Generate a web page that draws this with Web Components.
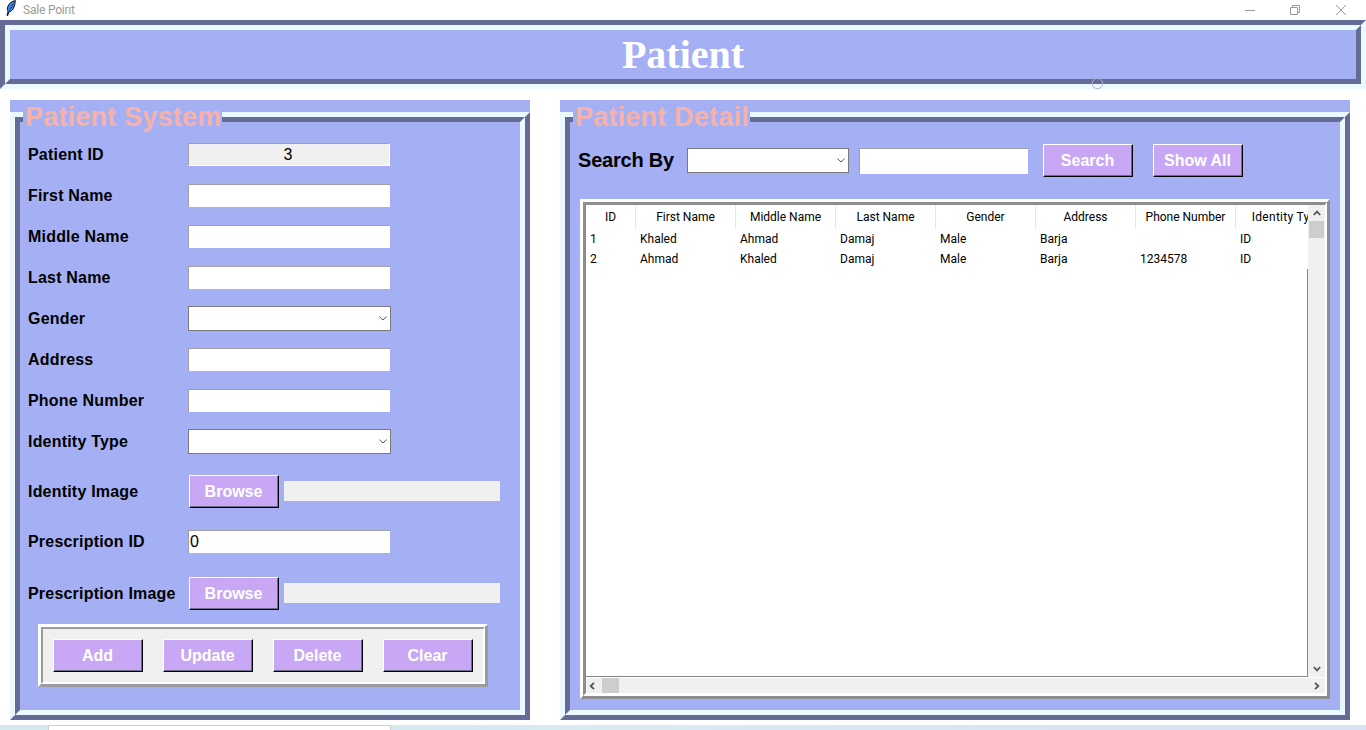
<!DOCTYPE html>
<html>
<head>
<meta charset="utf-8">
<title>Sale Point</title>
<style>
  html, body { margin: 0; height: 730px; overflow: hidden; background: #fff; }
  body { font-family: "Liberation Sans", Arial, sans-serif; display: flex; flex-direction: column; position: relative; }
  .panels { display: flex; gap: 30px; padding: 11px 16px 5px 10px; }
  .pointer { position: absolute; left: 1091px; top: 77px; }
</style>
</head>
<body>
<win-titlebar>Sale Point</win-titlebar>
<page-header>Patient</page-header>

<div class="panels">
  <ridge-panel label="Patient System" style="width:520px">
    <patient-form></patient-form>
  </ridge-panel>
  <ridge-panel label="Patient Detail" style="width:790px">
    <patient-detail></patient-detail>
  </ridge-panel>
</div>

<desk-strip></desk-strip>

<svg class="pointer" width="13" height="13" viewBox="0 0 13 13"><circle cx="6.5" cy="6.5" r="5.2" fill="none" stroke="#aeb3cf" stroke-width="1"/></svg>

<script>
/* small window widgets - plain Web Components */

const colors = `
  --blue: #a5b0f4;
  --dark: #636b96;
  --light: #e9f9ff;
  --purple: #c8a7f4;
  --entry: #f0f0f0;
`;

const chevron = `<svg width="8" height="5" viewBox="0 0 8 5"><path d="M.4 .6 4 4 7.6 .6" fill="none" stroke="#555" stroke-width="1"/></svg>`;

function define(name, html, init) {
  const tpl = document.createElement('template');
  tpl.innerHTML = html;
  customElements.define(name, class extends HTMLElement {
    constructor() {
      super();
      this.attachShadow({ mode: 'open' });
      this.shadowRoot.appendChild(tpl.content.cloneNode(true));
    }
    connectedCallback() { if (init) init(this, this.shadowRoot); }
  });
}

define('win-titlebar', `
  <style>
    :host { display: flex; align-items: center; height: 20px; background: #fff; font: 12px Roboto, sans-serif; letter-spacing: -.2px; color: #9a9a9a; padding-right: 5px; }
    .feather { margin: 0 7px 0 6px; align-self: flex-start; }
    .name { flex: 1; }
    .ctl { display: flex; width: 46px; justify-content: center; }
  </style>
  <svg class="feather" width="10" height="16" viewBox="0 0 10 16">
    <path d="M9.3 .6C6.4 1 3.2 3 1.9 6.4 1.1 8.6 1.3 10.4 2 11.6L1 15.4 1.7 15.6 2.8 12C5.2 11.8 7.4 9.4 8.3 6.2 8.9 4.2 9.2 2.2 9.3 .6Z" fill="#3f86e0" stroke="#0c0f16" stroke-width="1"/>
    <path d="M7.6 3.4C6.2 5.6 4.8 8 3.2 10.2" fill="none" stroke="#0c2a55" stroke-width=".8"/>
  </svg>
  <span class="name"><slot></slot></span>
  <span class="ctl"><svg width="10" height="10" viewBox="0 0 10 10"><path d="M0 5.5H10" stroke="#999" fill="none"/></svg></span>
  <span class="ctl" style="margin-left:-1px"><svg width="10" height="10" viewBox="0 0 10 10"><path d="M.5 2.5H7.5V9.5H.5ZM2.5 2.5V.5H9.5V7.5H7.5" stroke="#999" fill="none"/></svg></span>
  <span class="ctl" style="margin-right:-3px;margin-left:0"><svg width="10" height="10" viewBox="0 0 10 10"><path d="M0 0 10 10M10 0 0 10" stroke="#999" fill="none"/></svg></span>
`);

define('page-header', `
  <style>
    :host { ${colors} display: block; box-sizing: border-box; height: 69px; border: 5px solid; border-color: var(--dark) var(--light) var(--light) var(--dark); }
    .in { box-sizing: border-box; height: 59px; border: 5px solid; border-color: var(--light) var(--dark) var(--dark) var(--light); background: var(--blue);
      display: flex; align-items: center; justify-content: center; font: bold 40px/49px "Liberation Serif", "Times New Roman", serif; color: #fff; }
  </style>
  <div class="in"><slot></slot></div>
`);

define('ridge-panel', `
  <style>
    :host { ${colors} display: block; box-sizing: border-box; height: 620px; padding-top: 12px; background: var(--blue); position: relative; }
    .out { box-sizing: border-box; height: 608px; border: 5px solid; border-color: var(--light) var(--dark) var(--dark) var(--light); }
    .in { box-sizing: border-box; height: 598px; border: 5px solid; border-color: var(--dark) var(--light) var(--light) var(--dark); }
    .label { position: absolute; left: 14px; top: 2px; padding: 0 1px 0 2px; height: 31px; background: var(--blue);
      font: bold 27px/31px "Liberation Sans", Arial, sans-serif; letter-spacing: .2px; color: #f6b2a8; margin-left: -1px; }
  </style>
  <div class="out"><div class="in"><slot></slot></div></div>
  <div class="label"></div>
`, (el, root) => { root.querySelector('.label').textContent = el.getAttribute('label'); });

define('ui-btn', `
  <style>
    :host { ${colors} display: block; flex: none; box-sizing: border-box; width: 90px; height: 33px; background: var(--purple);
      border-style: solid; border-width: 1px 1px 1px 1px; border-color: #fff #000 #000 #fff; box-shadow: inset -1px -1px 0 #6e6a8c;
      font: bold 16px/32px "Liberation Sans", Arial, sans-serif; color: #fff; text-align: center; padding-right: 1px; }
  </style>
  <slot></slot>
`);

define('ui-entry', `
  <style>
    :host { ${colors} display: block; flex: none; box-sizing: border-box; width: 202px; height: 23px; background: #fff;
      border-style: solid; border-width: 1px 0 0 1px; border-color: #a0a0a0;
      font: 16px/22px "Liberation Sans", Arial, sans-serif; color: #000; padding-left: 1px; }
    :host([readonly]) { background: var(--entry); text-align: center; border-width: 1px 1px 1px 1px; border-color: #a0a0a0 #fff #fff #a0a0a0; line-height: 21px; padding: 0 2px 0 0; }
  </style>
  <slot></slot>
`);

define('ui-select', `
  <style>
    :host { display: flex; flex: none; align-items: center; justify-content: flex-end; box-sizing: border-box; width: 203px; height: 25px;
      background: #fff; border: 1px solid #7a7a7a; padding-right: 3px; }
  </style>
  ${chevron}
`);

define('form-row', `
  <style>
    :host { display: flex; align-items: center; height: var(--h, 41px); padding-left: 8px; }
    .lb { flex: none; width: 160px; font: bold 16px "Liberation Sans", Arial, sans-serif; letter-spacing: .2px; color: #000; white-space: nowrap; }
    ::slotted(ui-btn) { margin-left: 1px; }
  </style>
  <span class="lb"></span><slot></slot>
`, (el, root) => { root.querySelector('.lb').textContent = el.getAttribute('label'); });

define('file-path', `
  <style>
    :host { ${colors} display: block; flex: none; width: 216px; height: 20px; margin: -1px 0 0 5px; background: var(--entry); }
  </style>
`);

define('groove-box', `
  <style>
    :host { ${colors} display: block; box-sizing: border-box; border: 3px solid; border-color: #fff #9c9c9c #9c9c9c #fff; }
    .in { display: flex; gap: 20px; padding: 10px; border: 2px solid; border-color: #9c9c9c #fff #fff #9c9c9c; background: var(--entry); }
  </style>
  <div class="in"><slot></slot></div>
`);

define('patient-form', `
  <style>
    :host { display: block; padding-top: 12px; }
    groove-box { width: 450px; margin: -1px 0 0 18px; }
  </style>
  <form-row label="Patient ID"><ui-entry readonly>3</ui-entry></form-row>
  <form-row label="First Name"><ui-entry></ui-entry></form-row>
  <form-row label="Middle Name"><ui-entry></ui-entry></form-row>
  <form-row label="Last Name"><ui-entry></ui-entry></form-row>
  <form-row label="Gender"><ui-select></ui-select></form-row>
  <form-row label="Address"><ui-entry></ui-entry></form-row>
  <form-row label="Phone Number"><ui-entry></ui-entry></form-row>
  <form-row label="Identity Type"><ui-select></ui-select></form-row>
  <form-row label="Identity Image" style="--h:59px"><ui-btn>Browse</ui-btn><file-path></file-path></form-row>
  <form-row label="Prescription ID"><ui-entry>0</ui-entry></form-row>
  <form-row label="Prescription Image" style="--h:63px"><ui-btn>Browse</ui-btn><file-path></file-path></form-row>
  <groove-box>
    <ui-btn>Add</ui-btn><ui-btn>Update</ui-btn><ui-btn>Delete</ui-btn><ui-btn>Clear</ui-btn>
  </groove-box>
`);

define('patient-detail', `
  <style>
    :host { display: block; padding: 22px 10px 0 8px; }
    .search { display: flex; align-items: center; }
    .by { width: 109px; flex: none; font: bold 20px "Liberation Sans", Arial, sans-serif; letter-spacing: -.2px; color: #000; }
    ui-select { width: 162px; margin-right: 10px; }
    ui-entry { width: 169px; height: 26px; margin-right: 15px; }
    ui-btn + ui-btn { margin-left: 20px; }
    data-grid { margin: 22px 0 0 2px; }
  </style>
  <div class="search">
    <span class="by">Search By</span>
    <ui-select></ui-select>
    <ui-entry></ui-entry>
    <ui-btn>Search</ui-btn><ui-btn>Show All</ui-btn>
  </div>
  <data-grid></data-grid>
`);

define('data-grid', `
  <style>
    :host { display: block; box-sizing: border-box; width: 750px; height: 500px; border: 3px solid; border-color: #fff #8e8e8e #8e8e8e #fff; font: 12px Roboto, sans-serif; color: #000; }
    .frame { box-sizing: border-box; height: 494px; border: 3px solid; border-width: 3px 2px 3px 3px; border-color: #8e8e8e #fff #fff #8e8e8e; display: grid; grid-template: 1fr 16px / 1fr 17px; }
    .view { overflow: hidden; background: #fff; position: relative; border-bottom: 1px solid #828790; border-left: 1px solid #828790; margin-left: -1px; }
    .view::after { content: ""; position: absolute; right: 0; top: 64px; bottom: 0; width: 1px; background: #828790; }
    .row { display: grid; grid-template-columns: 50px repeat(7, 100px); width: 750px; height: 20px; line-height: 20px; }
    .row span { padding-left: 4px; white-space: nowrap; overflow: hidden; }
    .head { height: 24px; line-height: 24px; }
    .head span { padding: 0; text-align: center; height: 23px; box-sizing: border-box; border-right: 1px solid #e5e5e5; }
    .head span:last-child { letter-spacing: .3px; padding-left: 4px; }
    .bar { background: #f0f0f0; display: flex; align-items: center; justify-content: space-between; position: relative; }
    .v { flex-direction: column; padding: 5px 0 5px; }
    .h { padding: 0 4px 0 3px; border-top: 1px solid #fff; }
    .thumb { background: #cdcdcd; position: absolute; }
    .corner { background: #f0f0f0; border-top: 1px solid #fff; display: flex; align-items: center; justify-content: center; }
  </style>
  <div class="frame">
    <div class="view" id="view"></div>
    <div class="bar v">
      <svg width="8" height="6" viewBox="0 0 8 6"><path d="M.8 5 4 1.6 7.2 5" fill="none" stroke="#555" stroke-width="1.8"/></svg>
      <div class="thumb" style="left:1px;top:16px;width:15px;height:17px"></div>
      <svg width="8" height="6" viewBox="0 0 8 6"><path d="M.8 1 4 4.4 7.2 1" fill="none" stroke="#555" stroke-width="1.8"/></svg>
    </div>
    <div class="bar h">
      <svg width="6" height="8" viewBox="0 0 6 8"><path d="M5 .8 1.6 4 5 7.2" fill="none" stroke="#555" stroke-width="1.8"/></svg>
      <div class="thumb" style="left:16px;top:0;width:17px;height:15px"></div>
    </div>
    <div class="corner">
      <svg width="6" height="8" viewBox="0 0 6 8"><path d="M1 .8 4.4 4 1 7.2" fill="none" stroke="#555" stroke-width="1.8"/></svg>
    </div>
  </div>
`, (el, root) => {
  const head = ['ID', 'First Name', 'Middle Name', 'Last Name', 'Gender', 'Address', 'Phone Number', 'Identity Type'];
  const rows = [
    ['1', 'Khaled', 'Ahmad', 'Damaj', 'Male', 'Barja', '', 'ID'],
    ['2', 'Ahmad', 'Khaled', 'Damaj', 'Male', 'Barja', '1234578', 'ID'],
  ];
  const line = (cells, cls) => `<div class="row ${cls}">${cells.map(c => `<span>${c}</span>`).join('')}</div>`;
  root.getElementById('view').innerHTML = line(head, 'head') + rows.map(r => line(r, '')).join('');
});

define('desk-strip', `
  <style>
    :host { display: flex; height: 5px; background: linear-gradient(90deg, #d3e8ef 0, #d8e9f2 50%, #d8e3f1 100%); }
    .sheet { width: 343px; margin-left: 48px; box-sizing: border-box; background: #fff; border: 1px solid #cfcfcf; border-bottom: 0; }
  </style>
  <div class="sheet"></div>
`);
</script>
</body>
</html>
